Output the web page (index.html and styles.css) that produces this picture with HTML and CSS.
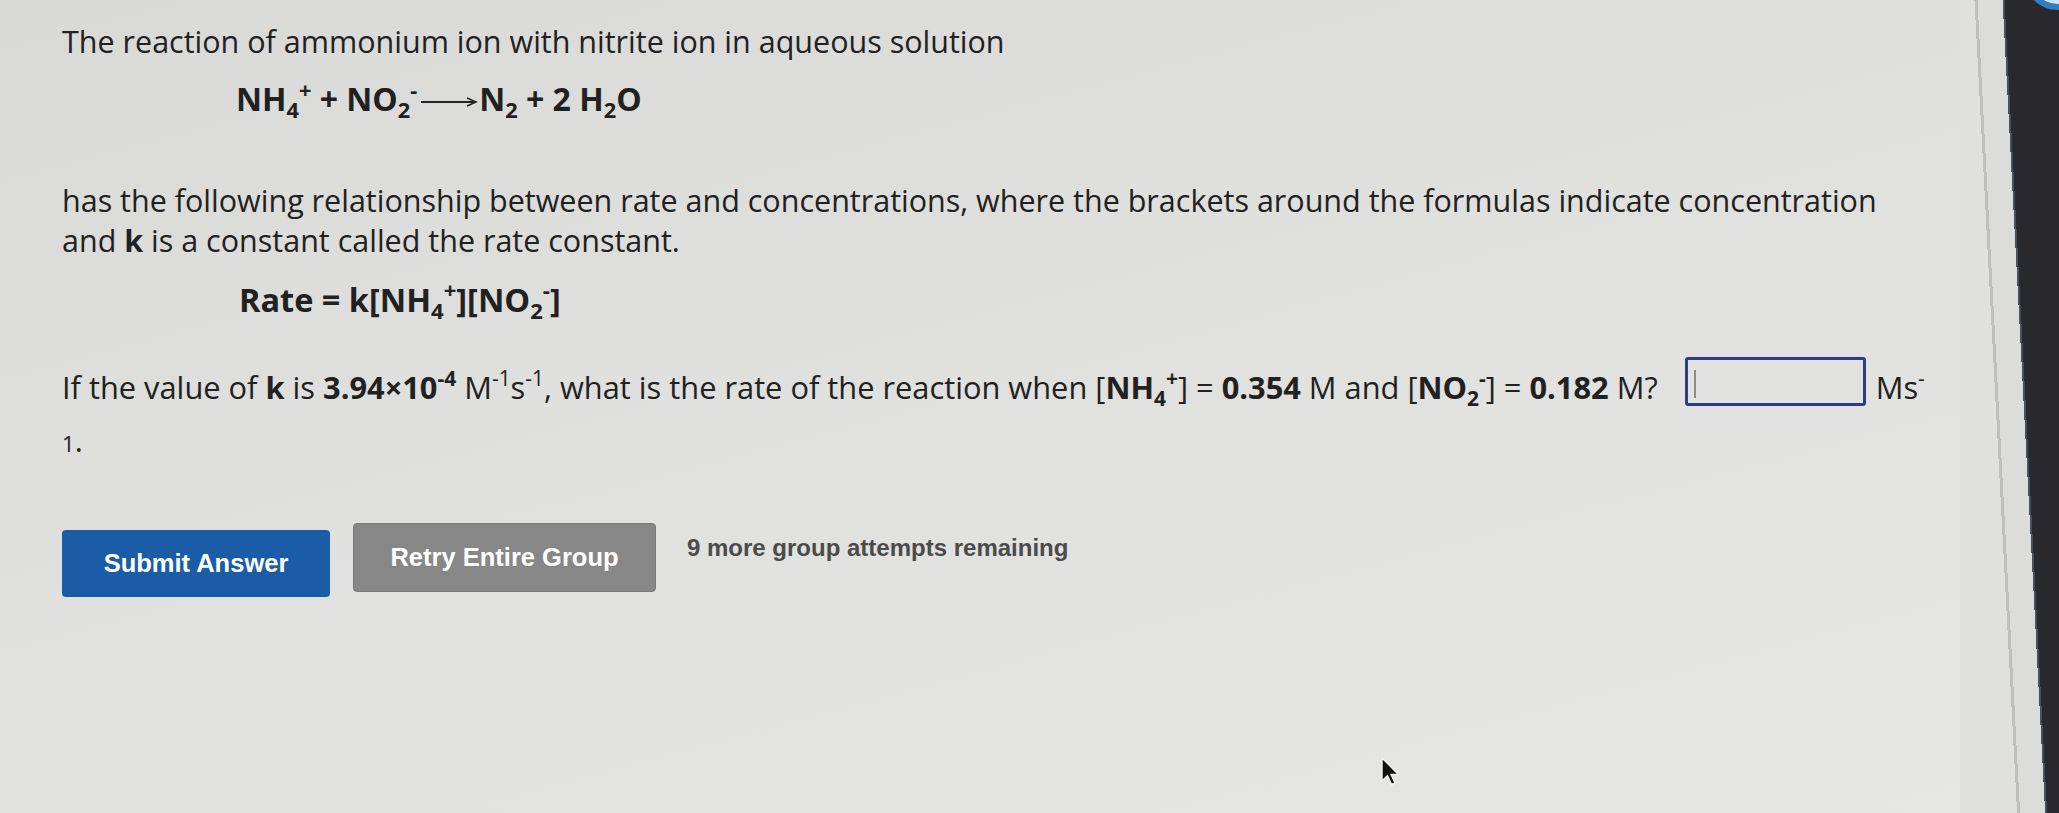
FILE: index.html
```html
<!DOCTYPE html>
<html lang="en">
<head>
<meta charset="utf-8">
<title>Rate of reaction</title>
<link rel="stylesheet" href="styles.css">
</head>
<body>
<div class="screen">
  <main class="page">
    <p class="intro">The reaction of ammonium ion with nitrite ion in aqueous solution</p>
    <p class="eq">NH<sub>4</sub><sup>+</sup> + NO<sub>2</sub><sup>-</sup><svg class="arrow" width="58" height="10" viewBox="0 0 58 10" aria-hidden="true"><path d="M1 5 H55" stroke="#252525" stroke-width="1.8" fill="none"/><path d="M47 1 L56 5 L47 9" stroke="#252525" stroke-width="1.8" fill="none" stroke-linejoin="miter"/></svg>N<sub>2</sub> + 2 H<sub>2</sub>O</p>
    <p class="para">has the following relationship between rate and concentrations, where the brackets around the formulas indicate concentration<br>and <b>k</b> is a constant called the rate constant.</p>
    <p class="eq rate">Rate = k[NH<sub>4</sub><sup>+</sup>][NO<sub>2</sub><sup>-</sup>]</p>
    <p class="question">If the value of <b>k</b> is <b>3.94×10<sup>-4</sup></b> M<sup>-1</sup>s<sup>-1</sup>, what is the rate of the reaction when [<b>NH<sub>4</sub><sup>+</sup></b>] = <b>0.354</b> M and [<b>NO<sub>2</sub><sup>-</sup></b>] = <b>0.182</b> M?<span class="answer"><span class="caret"></span></span>Ms<sup>-</sup><br><sup class="wrap-sup">1</sup>.</p>
    <div class="actions">
      <button class="btn btn-submit" type="button">Submit Answer</button>
      <button class="btn btn-retry" type="button">Retry Entire Group</button>
      <span class="remaining">9 more group attempts remaining</span>
    </div>
    <svg class="pointer" width="22" height="32" viewBox="0 0 22 32" aria-hidden="true">
      <path d="M2 2 L2 25 L7.5 19.5 L11.5 28.5 L15 27 L11 18.5 L18.5 18.5 Z" fill="#111" stroke="#f2f2f2" stroke-width="1.4" stroke-linejoin="round"/>
    </svg>
  </main>
  <div class="edge"><span class="edge-badge"></span></div>
</div>
</body>
</html>
```

FILE: styles.css
```css
html, body {
  margin: 0;
  padding: 0;
}

body {
  background: #e1e1df;
  overflow: hidden;
}

.screen {
  display: flex;
  width: 2059px;
  height: 813px;
  overflow: hidden;
  background: linear-gradient(165deg, #d9d9d7 0%, #e0e0de 45%, #e6e6e4 100%);
}

.page {
  position: relative;
  flex: 1;
  padding: 21px 0 0 62px;
  font-family: "Open Sans", "Liberation Sans", sans-serif;
  font-size: 30.5px;
  line-height: 40px;
  color: #212121;
}

p {
  margin: 0;
  white-space: nowrap;
}

sub, sup {
  font-size: 0.68em;
  line-height: 0;
}

sub {
  vertical-align: -0.32em;
}

sup {
  vertical-align: 0.62em;
}

b {
  font-weight: 700;
}

.eq {
  margin-top: 18px;
  margin-left: 174px;
  font-size: 32px;
  font-weight: 700;
}

.arrow {
  display: inline-block;
  vertical-align: 4px;
  margin: 0 1px 0 3px;
}

.para {
  margin-top: 61px;
}

.rate {
  margin-top: 20px;
  margin-left: 177px;
  font-size: 32.5px;
}

.question {
  margin-top: 37px;
  font-size: 30.8px;
  line-height: 53px;
}

.wrap-sup {
  vertical-align: 0;
  font-size: 0.72em;
}

.answer {
  display: inline-block;
  box-sizing: border-box;
  width: 181px;
  height: 49px;
  margin: 0 10px 0 27px;
  vertical-align: -7px;
  border: 3px solid #2f3d86;
  border-radius: 3px;
  padding: 10px 0 0 6px;
}

.caret {
  display: block;
  width: 2px;
  height: 28px;
  background: #8c8c8c;
}

.actions {
  display: flex;
  align-items: flex-start;
  margin-top: 56px;
}

.btn {
  box-sizing: border-box;
  border: none;
  border-radius: 4px;
  color: #ffffff;
  font-family: "Liberation Sans", Arial, sans-serif;
  font-weight: 700;
  font-size: 25.5px;
  padding: 0;
}

.btn-submit {
  width: 268px;
  height: 67px;
  margin-top: 7px;
  background: #1b5ca7;
}

.btn-retry {
  width: 303px;
  height: 69px;
  margin-left: 23px;
  background: #878787;
  border: 1px solid #7a7a7a;
}

.remaining {
  margin-left: 31px;
  margin-top: 10px;
  font-family: "Liberation Sans", Arial, sans-serif;
  font-weight: 700;
  font-size: 24px;
  line-height: 30px;
  color: #4b4b4b;
}

.pointer {
  position: absolute;
  left: 1380px;
  top: 756px;
}

.edge {
  position: relative;
  flex: 0 0 99px;
  background: linear-gradient(87deg, #e0e0de 0 57px, #bfbfbd 57px 60px, #dcdcda 60px 85px, #4a4f5c 85px 87px, #29282c 87px);
}

.edge-badge {
  position: absolute;
  left: 63px;
  top: -60px;
  width: 70px;
  height: 70px;
  box-sizing: border-box;
  border-radius: 50%;
  background: #2f7fc0;
  border: 6px solid #2f7fc0;
  box-shadow: inset 0 0 0 4px #cfe3f2;
}
```
